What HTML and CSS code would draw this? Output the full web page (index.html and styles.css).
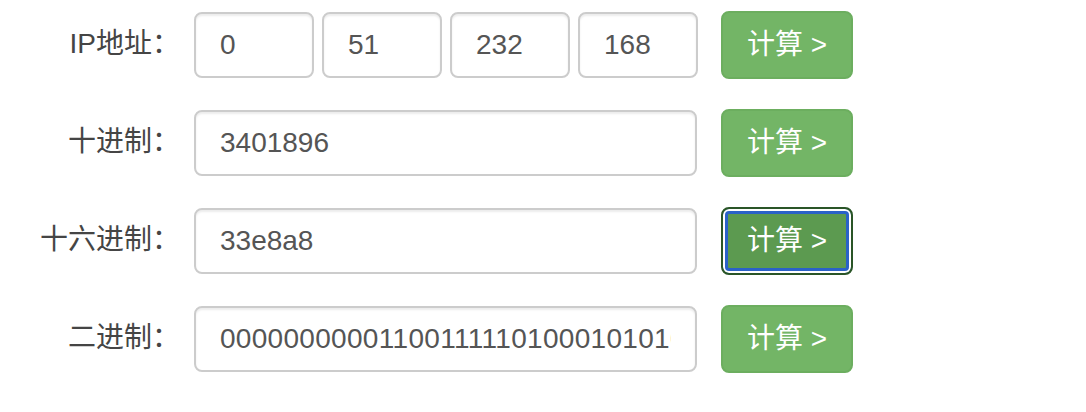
FILE: index.html
```html
<!DOCTYPE html>
<html lang="zh-CN">
<head>
<meta charset="utf-8">
<title>IP地址转换</title>
<link rel="stylesheet" href="styles.css">
</head>
<body>
<form class="converter">
  <div class="row">
    <label class="label">IP地址：</label>
    <div class="field ip-group">
      <input class="input ip" type="text" value="0">
      <input class="input ip" type="text" value="51">
      <input class="input ip" type="text" value="232">
      <input class="input ip" type="text" value="168">
    </div>
    <button class="btn" type="button">计算 &gt;</button>
  </div>
  <div class="row">
    <label class="label">十进制：</label>
    <div class="field"><input class="input" type="text" value="3401896"></div>
    <button class="btn" type="button">计算 &gt;</button>
  </div>
  <div class="row">
    <label class="label">十六进制：</label>
    <div class="field"><input class="input" type="text" value="33e8a8"></div>
    <button class="btn btn-focus" type="button">计算 &gt;</button>
  </div>
  <div class="row">
    <label class="label">二进制：</label>
    <div class="field"><input class="input input-binary" type="text" value="00000000001100111110100010101000"></div>
    <button class="btn" type="button">计算 &gt;</button>
  </div>
</form>
</body>
</html>
```

FILE: styles.css
```css
html, body {
  margin: 0;
  padding: 0;
  background: #ffffff;
}

body {
  font-family: "Liberation Sans", "Noto Sans CJK SC", sans-serif;
  font-size: 28px;
  color: #444444;
}

.converter {
  display: flex;
  flex-direction: column;
  gap: 30px;
  padding-top: 11px;
}

.row {
  display: flex;
  align-items: center;
  height: 68px;
}

.label {
  width: 180px;
  text-align: right;
  color: #454545;
  line-height: 1;
  margin-top: -3px;
  flex: none;
}

.field {
  width: 503px;
  margin-left: 14px;
  flex: none;
  display: flex;
}

.ip-group {
  gap: 8px;
}

.input {
  box-sizing: border-box;
  width: 100%;
  height: 66px;
  margin: 0;
  padding: 0 24px;
  border: 2px solid #cccccc;
  border-radius: 8px;
  background: #ffffff;
  box-shadow: inset 0 2px 2px rgba(0, 0, 0, 0.075);
  font-family: "Liberation Sans", sans-serif;
  font-size: 28px;
  color: #555555;
  outline: none;
}

.input-binary {
  letter-spacing: 0.3px;
}

.input.ip {
  width: 120px;
  flex: none;
}

.btn {
  box-sizing: border-box;
  width: 132px;
  height: 68px;
  margin: 0 0 0 24px;
  padding: 0;
  flex: none;
  border: 2px solid #6cae5f;
  border-radius: 8px;
  background: #73b566;
  color: #ffffff;
  font-family: "Liberation Sans", "Noto Sans CJK SC", sans-serif;
  font-size: 28px;
  line-height: 1;
  text-align: center;
  cursor: pointer;
}

.btn-focus {
  background: #5c9a50;
  border-color: #2a5527;
  box-shadow: inset 0 0 0 2px #ffffff, inset 0 0 0 5px #2a62c8;
}
```
